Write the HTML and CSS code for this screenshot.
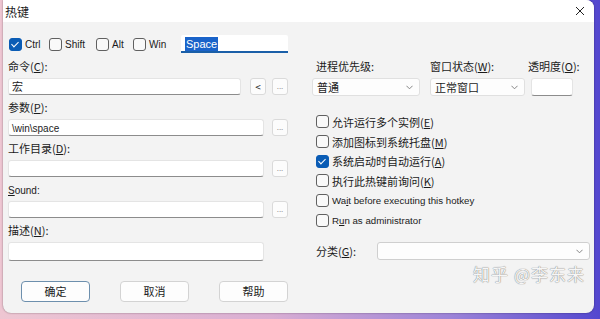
FILE: index.html
```html
<!DOCTYPE html>
<html lang="zh-CN">
<head>
  <meta charset="UTF-8" />
  <title>热键</title>
  <link rel="stylesheet" href="styles.css">
</head>
<body>
  <div class="window">
    <div class="titlebar">
      <span class="title">热键</span>
      <svg class="close" viewBox="0 0 10 10"><path d="M1 1L9 9M9 1L1 9" stroke="#222" stroke-width="1" fill="none"/></svg>
    </div>

    <div class="content">
      <div class="left">
        <div class="hotkey-row">
          <label class="check w-ctrl"><span class="box checked"></span><span class="en">Ctrl</span></label>
          <label class="check w-shift"><span class="box"></span><span class="en">Shift</span></label>
          <label class="check w-alt"><span class="box"></span><span class="en">Alt</span></label>
          <label class="check w-win"><span class="box"></span><span class="en">Win</span></label>
          <div class="key-input"><span class="selected en">Space</span></div>
        </div>

        <div class="field">
          <div class="label">命令(<u>C</u>):</div>
          <div class="input-row">
            <div class="input cmd">宏</div>
            <div class="mini dark">&lt;</div>
            <div class="mini">...</div>
          </div>
        </div>

        <div class="field">
          <div class="label">参数(<u>P</u>):</div>
          <div class="input-row">
            <div class="input"><span class="en">\win\space</span></div>
            <div class="mini">...</div>
          </div>
        </div>

        <div class="field">
          <div class="label">工作目录(<u>D</u>):</div>
          <div class="input-row">
            <div class="input"></div>
            <div class="mini">...</div>
          </div>
        </div>

        <div class="field">
          <div class="label"><span class="en"><u>S</u>ound:</span></div>
          <div class="input-row">
            <div class="input"></div>
            <div class="mini">...</div>
          </div>
        </div>

        <div class="field">
          <div class="label">描述(<u>N</u>):</div>
          <div class="input-row">
            <div class="input desc"></div>
          </div>
        </div>

        <div class="actions">
          <div class="btn primary">确定</div>
          <div class="btn">取消</div>
          <div class="btn">帮助</div>
        </div>
      </div>

      <div class="right">
        <div class="top-fields">
          <div class="col">
            <div class="label pad">进程优先级:</div>
            <div class="select">普通<svg class="chev" viewBox="0 0 8 5"><path d="M0.5 0.5L4 4L7.5 0.5" stroke="#777" fill="none"/></svg></div>
          </div>
          <div class="col">
            <div class="label">窗口状态(<u>W</u>):</div>
            <div class="select">正常窗口<svg class="chev" viewBox="0 0 8 5"><path d="M0.5 0.5L4 4L7.5 0.5" stroke="#777" fill="none"/></svg></div>
          </div>
          <div class="col">
            <div class="label">透明度(<u>O</u>):</div>
            <div class="input alpha"></div>
          </div>
        </div>

        <div class="options">
          <label class="check"><span class="box"></span><span>允许运行多个实例(<u>E</u>)</span></label>
          <label class="check"><span class="box"></span><span>添加图标到系统托盘(<u>M</u>)</span></label>
          <label class="check"><span class="box checked"></span><span>系统启动时自动运行(<u>A</u>)</span></label>
          <label class="check"><span class="box"></span><span>执行此热键前询问(<u>K</u>)</span></label>
          <label class="check"><span class="box"></span><span class="en">Wa<u>i</u>t before executing this hotkey</span></label>
          <label class="check"><span class="box"></span><span class="en">R<u>u</u>n as administrator</span></label>
        </div>

        <div class="category">
          <div class="label">分类(<u>G</u>):</div>
          <div class="select wide"><svg class="chev" viewBox="0 0 8 5"><path d="M0.5 0.5L4 4L7.5 0.5" stroke="#777" fill="none"/></svg></div>
        </div>
      </div>
    </div>

    <div class="watermark">知乎 @李东来</div>
  </div>
</body>
</html>
```

FILE: styles.css
```css
* {
  box-sizing: border-box;
  margin: 0;
  padding: 0;
}

body {
  width: 600px;
  height: 319px;
  overflow: hidden;
  background: linear-gradient(90deg, #eec6d2 0%, #d9aed3 45%, #9c83d8 75%, #5347cf 100%);
  padding: 0 6px 6px 3px;
  font-family: "Noto Sans CJK SC", "Noto Sans", sans-serif;
  font-size: 11px;
  color: #1b1b1b;
}

.en {
  font-family: "Liberation Sans", Arial, sans-serif;
  font-size: 10px;
}

.options .en {
  font-size: 9.7px;
}

.window {
  position: relative;
  height: 313px;
  background: #f3f3f3;
  border-radius: 0 8px 8px 8px;
  box-shadow: 0 0 2px rgba(0, 0, 0, 0.45);
  overflow: hidden;
}

.titlebar {
  height: 22px;
  background: #ffffff;
  display: flex;
  align-items: center;
  justify-content: space-between;
  padding: 0 9px 0 2px;
}

.title {
  font-size: 12px;
}

.close {
  width: 10px;
  height: 10px;
}

.content {
  display: flex;
  gap: 24px;
  padding: 13px 4px 0 5px;
}

.left {
  width: 280px;
  display: flex;
  flex-direction: column;
}

.right {
  flex: 1;
  display: flex;
  flex-direction: column;
}

u {
  text-decoration: underline;
  text-underline-offset: 1px;
}

.label {
  height: 16px;
  line-height: 16px;
  white-space: nowrap;
}

.label.pad {
  padding-left: 4px;
}

/* checkboxes */
.check {
  display: flex;
  align-items: center;
  gap: 3px;
  white-space: nowrap;
}

.box {
  width: 13px;
  height: 13px;
  flex: none;
  border: 1px solid #606060;
  border-radius: 3px;
  background: #f9f9f9;
  position: relative;
}

.box.checked {
  background: #0a5cb5;
  border-color: #0a5cb5;
}

.box.checked::after {
  content: "";
  position: absolute;
  left: 3px;
  top: 1px;
  width: 3px;
  height: 6px;
  border: solid #fff;
  border-width: 0 1.5px 1.5px 0;
  transform: rotate(45deg);
}

.hotkey-row {
  height: 18px;
  display: flex;
  align-items: center;
  padding-left: 1px;
}

.w-ctrl { width: 40px; }
.w-shift { width: 47px; }
.w-alt { width: 37px; }
.w-win { width: 48px; }

.key-input {
  width: 107px;
  height: 18px;
  background: #fff;
  border-bottom: 2px solid #1a5fa8;
  border-radius: 2px 2px 0 0;
  padding: 1px 0 0 4px;
  line-height: 15px;
}

.key-input .selected {
  background: #1a63c9;
  color: #fff;
  padding: 1px 1px;
  font-size: 11px;
}

/* fields */
.field {
  margin-top: 5px;
}

.field + .field {
  margin-top: 4px;
}

.input-row {
  display: flex;
  margin-top: 4px;
  gap: 8px;
}

.input {
  flex: 1;
  height: 17px;
  background: #fff;
  border: 1px solid #e4e4e4;
  border-bottom-color: #8c8c8c;
  border-radius: 3px;
  line-height: 15px;
  padding-left: 3px;
}

.input.cmd {
  flex: none;
  width: 233px;
  margin-right: 1px;
}

.input.desc {
  height: 19px;
  margin-right: 24px;
}

.mini {
  width: 16px;
  height: 17px;
  flex: none;
  background: #fcfcfc;
  border: 1px solid #dadada;
  border-radius: 3px;
  font-size: 8px;
  color: #999;
  text-align: center;
  line-height: 13px;
}

.mini.dark {
  color: #222;
  font-size: 10px;
  line-height: 15px;
  margin-right: -2px;
}

.actions {
  display: flex;
  gap: 30px;
  margin-top: 20px;
  padding-left: 13px;
}

.btn {
  width: 69px;
  height: 21px;
  background: #fdfdfd;
  border: 1px solid #d3d3d3;
  border-radius: 4px;
  text-align: center;
  line-height: 19px;
}

.btn.primary {
  border-color: #6d8fad;
}

/* right column */
.top-fields {
  display: grid;
  grid-template-columns: 108px 95px 38px;
  column-gap: 10px;
  margin-top: 23px;
}

.col .label {
  margin-bottom: 4px;
}

.col:last-child .label {
  margin-left: -7px;
}

.select {
  height: 18px;
  background: #fdfdfd;
  border: 1px solid #e0e0e0;
  border-radius: 3px;
  line-height: 16px;
  padding-left: 4px;
  position: relative;
}

.chev {
  position: absolute;
  right: 6px;
  top: 6px;
  width: 7px;
  height: 5px;
}

.input.alpha {
  height: 18px;
  margin-left: -4px;
}

.options {
  margin-top: 16px;
  padding-left: 4px;
  display: flex;
  flex-direction: column;
}

.options .check {
  height: 19.7px;
}

.category {
  display: flex;
  align-items: center;
  margin-top: 12px;
  padding-left: 4px;
}

.category .label {
  width: 61px;
}

.select.wide {
  flex: 1;
  height: 18px;
  border-color: #cfcfcf;
}

.watermark {
  position: absolute;
  right: 9px;
  top: 261px;
  font-size: 17px;
  letter-spacing: 1px;
  color: #f6f6f6;
  text-shadow: 0 0 1px rgba(0, 0, 0, 0.45), 0 0 1px rgba(0, 0, 0, 0.3);
}
```
